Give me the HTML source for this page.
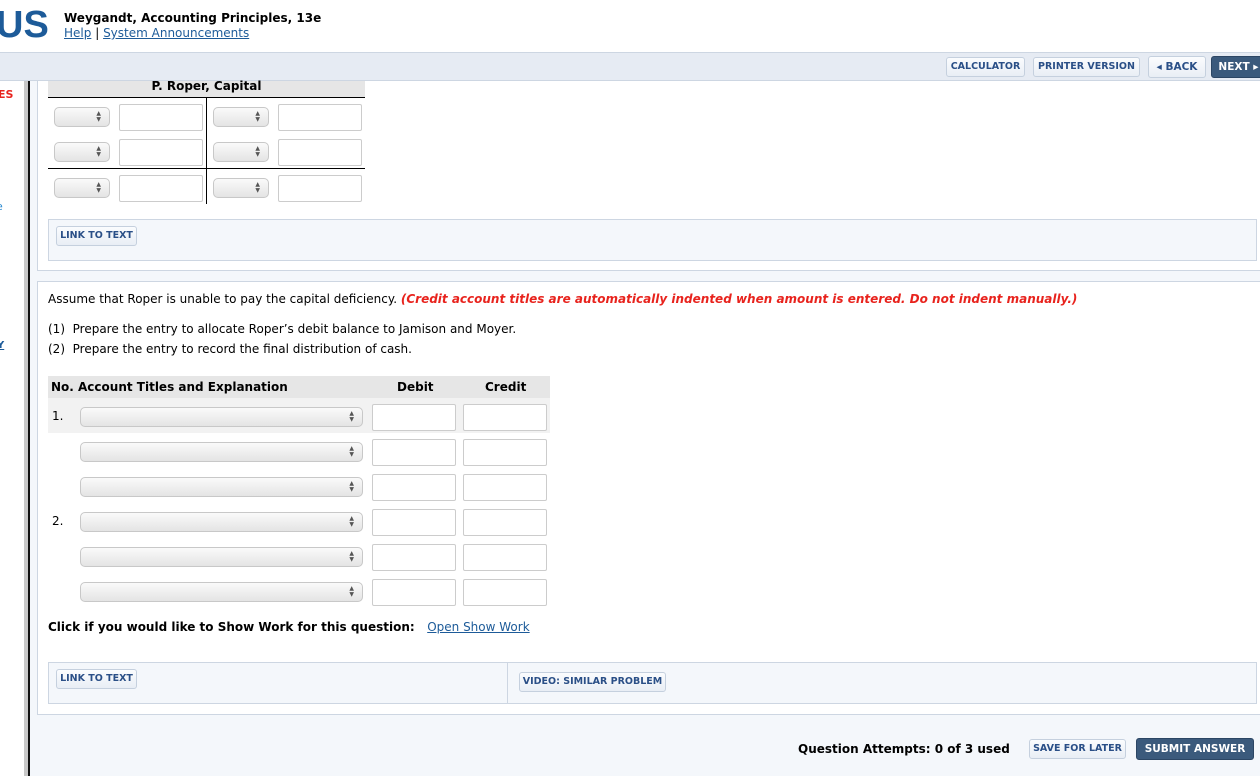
<!DOCTYPE html>
<html><head><style>
*{box-sizing:border-box;margin:0;padding:0}
body{width:1260px;height:776px;overflow:hidden;background:#fff;font-family:"DejaVu Sans","Liberation Sans",sans-serif;position:relative;font-size:12px;color:#000}
.a{position:absolute}
.btn{position:absolute;border:1px solid #c5d0de;border-radius:3px;background:linear-gradient(#fbfcfe,#e9eef5);color:#2a4f87;font-weight:bold;font-size:9.5px;text-align:center;line-height:18px}
.sel{position:absolute;height:20px;border:1px solid #c8c8c8;border-radius:5px;background:linear-gradient(#fafafa,#e4e4e4)}
.sel:after{content:"\25B2\A\25BC";white-space:pre;position:absolute;right:8px;top:3px;font-size:6px;line-height:6px;color:#555}
.inp{position:absolute;border:1px solid #ccc;border-radius:2px;background:#fff;height:27px}
</style></head><body>
<div class="a" style="top:4px;font-size:38px;font-weight:bold;color:#1d5b99;font-family:'Liberation Sans',sans-serif;left:-4px">US</div>
<div class="a" style="left:64px;top:11px;font-weight:bold;font-size:12px">Weygandt, Accounting Principles, 13e</div>
<div class="a" style="left:64px;top:26px;font-size:12px;color:#1d5b99"><u>Help</u> <span style="color:#000">|</span> <u>System Announcements</u></div>
<div class="a" style="left:0;top:52px;width:1260px;height:29px;background:#e6ebf3;border-top:1px solid #cdd6e2;border-bottom:1px solid #cdd6e2"></div>
<div class="btn" style="left:946px;top:57px;width:79px">CALCULATOR</div>
<div class="btn" style="left:1033px;top:57px;width:107px">PRINTER VERSION</div>
<div class="btn" style="left:1148px;top:56px;width:58px;height:22px;line-height:20px;font-size:10.5px">◂ BACK</div>
<div class="btn" style="left:1211px;top:56px;width:55px;height:22px;line-height:20px;font-size:10.5px;background:#3b5a7c;color:#fff;border-color:#2c4664">NEXT ▸</div>
<div class="a" style="top:88px;color:#e8231d;font-weight:bold;font-size:11px;left:-2px">ES</div>
<div class="a" style="top:200px;color:#2a8ad0;font-size:11px;left:-4px">e</div>
<div class="a" style="top:340px;color:#1d5b99;font-weight:bold;font-size:10px;left:-3px"><u>Y</u></div>
<div class="a" style="left:24px;top:81px;width:4px;height:695px;background:#c8c8c8"></div>
<div class="a" style="left:28px;top:81px;width:2px;height:695px;background:#111"></div>
<div class="a" style="left:30px;top:81px;width:1230px;height:695px;background:#f4f7fb"></div>
<div class="a" style="left:37px;top:81px;width:1230px;height:190px;background:#fff;border:1px solid #cdd6e2;border-top:none"></div>
<div class="a" style="left:48px;top:81px;width:317px;height:16px;background:#e6e6e6;text-align:center;font-weight:bold;font-size:12px;line-height:10px">P. Roper, Capital</div>
<div class="a" style="left:48px;top:97px;width:317px;height:1px;background:#000"></div>
<div class="a" style="left:48px;top:168px;width:317px;height:1px;background:#000"></div>
<div class="a" style="left:206px;top:97px;width:1px;height:107px;background:#000"></div>
<div class="sel" style="left:54px;top:107px;width:56px"></div><div class="inp" style="left:119px;top:104px;width:84px"></div>
<div class="sel" style="left:213px;top:107px;width:56px"></div><div class="inp" style="left:278px;top:104px;width:84px"></div>
<div class="sel" style="left:54px;top:142px;width:56px"></div><div class="inp" style="left:119px;top:139px;width:84px"></div>
<div class="sel" style="left:213px;top:142px;width:56px"></div><div class="inp" style="left:278px;top:139px;width:84px"></div>
<div class="sel" style="left:54px;top:178px;width:56px"></div><div class="inp" style="left:119px;top:175px;width:84px"></div>
<div class="sel" style="left:213px;top:178px;width:56px"></div><div class="inp" style="left:278px;top:175px;width:84px"></div>
<div class="a" style="left:48px;top:219px;width:1209px;height:42px;background:#f4f7fb;border:1px solid #cdd6e2"></div>
<div class="btn" style="left:56px;top:226px;width:81px">LINK TO TEXT</div>
<div class="a" style="left:37px;top:281px;width:1230px;height:434px;background:#fff;border:1px solid #cdd6e2"></div>
<div class="a" style="left:48px;top:292px;font-size:12px">Assume that Roper is unable to pay the capital deficiency. <b style="color:#e8231d;font-style:italic">(Credit account titles are automatically indented when amount is entered. Do not indent manually.)</b></div>
<div class="a" style="left:48px;top:319px;font-size:12px;line-height:20px">(1)&nbsp; Prepare the entry to allocate Roper’s debit balance to Jamison and Moyer.<br>(2)&nbsp; Prepare the entry to record the final distribution of cash.</div>
<div class="a" style="left:48px;top:376px;width:502px;height:22px;background:#e6e6e6;font-weight:bold;font-size:12px;line-height:22px">
<span class="a" style="left:3px">No. Account Titles and Explanation</span><span class="a" style="left:349px">Debit</span><span class="a" style="left:437px">Credit</span></div>
<div class="a" style="left:48px;top:398px;width:502px;height:35px;background:#f2f2f2"></div>
<div class="a" style="left:52px;top:409px">1.</div><div class="a" style="left:52px;top:514px">2.</div>
<div class="sel" style="left:80px;top:407px;width:283px"></div><div class="inp" style="left:372px;top:404px;width:84px"></div><div class="inp" style="left:463px;top:404px;width:84px"></div>
<div class="sel" style="left:80px;top:442px;width:283px"></div><div class="inp" style="left:372px;top:439px;width:84px"></div><div class="inp" style="left:463px;top:439px;width:84px"></div>
<div class="sel" style="left:80px;top:477px;width:283px"></div><div class="inp" style="left:372px;top:474px;width:84px"></div><div class="inp" style="left:463px;top:474px;width:84px"></div>
<div class="sel" style="left:80px;top:512px;width:283px"></div><div class="inp" style="left:372px;top:509px;width:84px"></div><div class="inp" style="left:463px;top:509px;width:84px"></div>
<div class="sel" style="left:80px;top:547px;width:283px"></div><div class="inp" style="left:372px;top:544px;width:84px"></div><div class="inp" style="left:463px;top:544px;width:84px"></div>
<div class="sel" style="left:80px;top:582px;width:283px"></div><div class="inp" style="left:372px;top:579px;width:84px"></div><div class="inp" style="left:463px;top:579px;width:84px"></div>
<div class="a" style="left:48px;top:620px;font-weight:bold;font-size:12px">Click if you would like to Show Work for this question: &nbsp;&nbsp;<u style="font-weight:normal;color:#1d5b99">Open Show Work</u></div>
<div class="a" style="left:48px;top:662px;width:1209px;height:42px;background:#f4f7fb;border:1px solid #cdd6e2"></div>
<div class="a" style="left:507px;top:662px;width:1px;height:42px;background:#cdd6e2"></div>
<div class="btn" style="left:56px;top:669px;width:81px">LINK TO TEXT</div>
<div class="btn" style="left:519px;top:672px;width:147px">VIDEO: SIMILAR PROBLEM</div>
<div class="a" style="left:798px;top:742px;font-weight:bold;font-size:12px">Question Attempts: 0 of 3 used</div>
<div class="btn" style="left:1029px;top:739px;width:97px;height:20px">SAVE FOR LATER</div>
<div class="btn" style="left:1136px;top:738px;width:118px;height:22px;line-height:20px;font-size:10.5px;background:#3b5a7c;color:#fff;border-color:#2c4664">SUBMIT ANSWER</div>
</body></html>
